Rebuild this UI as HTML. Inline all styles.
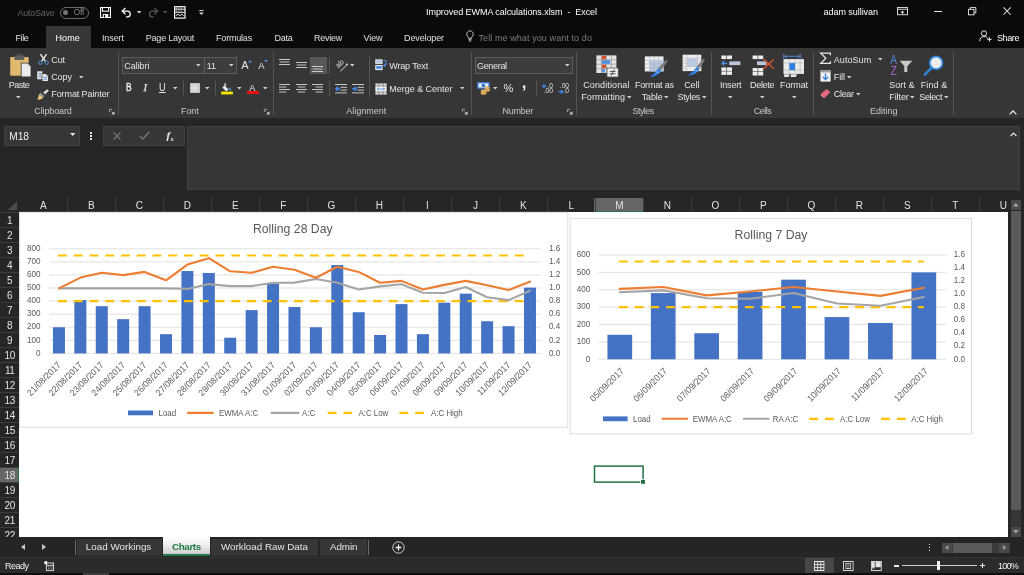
<!DOCTYPE html><html><head><meta charset="utf-8"><title>Improved EWMA calculations.xlsm - Excel</title><style>
*{box-sizing:border-box;margin:0;padding:0}
html,body{width:1024px;height:575px;overflow:hidden;background:#262626}
body{font-family:"Liberation Sans",sans-serif;font-size:9px;color:#e6e6e6;position:relative}
.a{position:absolute}
.t{position:absolute;white-space:nowrap;line-height:12px;height:12px}
.c{text-align:center}
svg{position:absolute;overflow:visible}
</style></head><body><div id="w" style="position:absolute;left:0;top:0;width:1024px;height:575px;will-change:transform">
<div class="a" style="left:0px;top:0px;width:1024px;height:48px;background:#0a0a0a;"></div>
<div class="a" style="left:46px;top:26px;width:45px;height:22px;background:#363636;"></div>
<div class="t" style="left:17.5px;top:7.00px;font-size:9px;color:#626262;letter-spacing:-0.254px;">AutoSave</div>
<div class="a" style="left:60px;top:7px;width:29px;height:12px;border:1px solid #6a6a6a;border-radius:6px"></div>
<div class="a" style="left:63px;top:10px;width:5.2px;height:5.2px;border-radius:50%;background:#767676"></div>
<div class="t" style="left:73.8px;top:7.2px;color:#8a8a8a;font-size:8.2px;letter-spacing:-0.2px">Off</div>
<svg style="left:100.1px;top:7px" width="11" height="11" viewBox="0 0 12 12"><path d="M0.6 0.6h10.8v10.8h-10.8z" fill="none" stroke="#fff" stroke-width="1.2"/><rect x="2.6" y="0.6" width="6.8" height="4" fill="none" stroke="#fff" stroke-width="1.1"/><rect x="3" y="7.6" width="6" height="3.8" fill="#fff"/><rect x="4.2" y="8.6" width="1.5" height="2.8" fill="#0a0a0a"/></svg>
<svg style="left:121.3px;top:6.8px" width="11.8" height="10.9" viewBox="0 0 13 12"><path d="M5 1 L1.3 4.5 L5 8" fill="none" stroke="#fff" stroke-width="1.4"/><path d="M1.5 4.5 H7.5 A3.3 3.3 0 0 1 7.5 11 H5.5" fill="none" stroke="#fff" stroke-width="1.4"/></svg>
<svg style="left:137px;top:11px" width="4.4" height="2.6"><path d="M0 0h4.4l-2.2 2.6z" fill="#ddd"/></svg>
<svg style="left:147.2px;top:6.8px" width="11.8" height="10.9" viewBox="0 0 13 12"><g transform="translate(13,0) scale(-1,1)"><path d="M5 1 L1.3 4.5 L5 8" fill="none" stroke="#555" stroke-width="1.4"/><path d="M1.5 4.5 H7.5 A3.3 3.3 0 0 1 7.5 11 H5.5" fill="none" stroke="#555" stroke-width="1.4"/></g></svg>
<svg style="left:163.2px;top:11px" width="4.4" height="2.6"><path d="M0 0h4.4l-2.2 2.6z" fill="#555"/></svg>
<svg style="left:173.8px;top:6.2px" width="11.6" height="12.8" viewBox="0 0 12 13"><rect x="0.6" y="0.6" width="10.8" height="11.8" fill="none" stroke="#fff" stroke-width="1.2"/><path d="M0.6 3.2H11.4M0.6 6.4H11.4" stroke="#fff" stroke-width="1"/><path d="M2 2h1.2M4.4 2h1.2M6.8 2h1.2M2 5h1.2M4.4 5h1.2M6.8 5h1.2" stroke="#fff" stroke-width="0.9"/><path d="M2 9.8l2-1.4 2 1.4 2-1.4 2 1.4" fill="none" stroke="#fff" stroke-width="1"/></svg>
<svg style="left:199px;top:10px" width="5" height="6"><path d="M0.3 0.6h4.2" stroke="#ddd" stroke-width="1"/><path d="M0.1 2.4h4.6l-2.3 2.7z" fill="#ddd"/></svg>
<div class="t" style="left:426px;top:6.00px;font-size:9px;color:#fff;letter-spacing:-0.050px;">Improved EWMA calculations.xlsm &nbsp;-&nbsp; Excel</div>
<div class="t" style="left:823.5px;top:6.00px;font-size:9px;color:#fff;letter-spacing:-0.041px;">adam sullivan</div>
<svg style="left:897.3px;top:7px" width="11" height="8.2" viewBox="0 0 12 9"><rect x="0.5" y="0.5" width="11" height="8" fill="none" stroke="#e6e6e6" stroke-width="1"/><path d="M0.5 2.5H11.5" stroke="#e6e6e6" stroke-width="1"/><path d="M6 3.8l2.2 2.4H3.8z" fill="#e6e6e6"/><path d="M6 6v1.6" stroke="#e6e6e6" stroke-width="1"/></svg>
<div class="a" style="left:933.7px;top:10.6px;width:8px;height:1px;background:#e6e6e6;"></div>
<svg style="left:967.8px;top:7px" width="8.3" height="8.3" viewBox="0 0 9 9"><rect x="0.5" y="2.5" width="6" height="6" fill="none" stroke="#e6e6e6" stroke-width="1"/><path d="M2.5 2.5V0.5H8.5V6.5H6.5" fill="none" stroke="#e6e6e6" stroke-width="1"/></svg>
<svg style="left:1002.6px;top:7.3px" width="8.2" height="8.2" viewBox="0 0 9 9"><path d="M0.5 0.5L8.5 8.5M8.5 0.5L0.5 8.5" stroke="#e6e6e6" stroke-width="1.1"/></svg>
<div class="t" style="left:15.5px;top:31.50px;font-size:9px;color:#e0e0e0;letter-spacing:-0.376px;">File</div>
<div class="t" style="left:55.5px;top:31.50px;font-size:9px;color:#fff;letter-spacing:0.123px;">Home</div>
<div class="t" style="left:102px;top:31.50px;font-size:9px;color:#e0e0e0;letter-spacing:-0.126px;">Insert</div>
<div class="t" style="left:145.75px;top:31.50px;font-size:9px;color:#e0e0e0;letter-spacing:-0.208px;">Page Layout</div>
<div class="t" style="left:216px;top:31.50px;font-size:9px;color:#e0e0e0;letter-spacing:-0.188px;">Formulas</div>
<div class="t" style="left:274.5px;top:31.50px;font-size:9px;color:#e0e0e0;letter-spacing:-0.253px;">Data</div>
<div class="t" style="left:314px;top:31.50px;font-size:9px;color:#e0e0e0;letter-spacing:-0.252px;">Review</div>
<div class="t" style="left:363.5px;top:31.50px;font-size:9px;color:#e0e0e0;letter-spacing:-0.086px;">View</div>
<div class="t" style="left:404px;top:31.50px;font-size:9px;color:#e0e0e0;letter-spacing:-0.114px;">Developer</div>
<svg style="left:466.2px;top:31.4px" width="8" height="11" viewBox="0 0 8 11"><path d="M2.6 7.4V6.2A3.3 3.3 0 1 1 5.4 6.2V7.4z" fill="none" stroke="#d4d4d4" stroke-width="0.9"/><path d="M2.5 8.7H5.5M2.8 10H5.2" stroke="#d4d4d4" stroke-width="0.9"/></svg>
<div class="t" style="left:478.5px;top:31.50px;font-size:9px;color:#7c7c7c;letter-spacing:0.090px;">Tell me what you want to do</div>
<svg style="left:979.4px;top:30.4px" width="13" height="12" viewBox="0 0 13 12"><circle cx="5" cy="3.4" r="2.6" fill="none" stroke="#e6e6e6" stroke-width="1"/><path d="M0.6 11.2C0.8 8 2.6 6.6 5 6.6S8.4 7.4 8.8 8.6" fill="none" stroke="#e6e6e6" stroke-width="1"/><path d="M10.4 7.2v4.4M8.2 9.4h4.4" stroke="#e6e6e6" stroke-width="1"/></svg>
<div class="t" style="left:997px;top:31.50px;font-size:9px;color:#fff;letter-spacing:-0.403px;">Share</div>
<div class="a" style="left:0px;top:48px;width:1024px;height:70px;background:#363636;"></div>
<svg style="left:9.5px;top:54px" width="22" height="23" viewBox="0 0 22 23">
<rect x="0.2" y="3" width="18.5" height="18.8" rx="0.8" fill="#e0b96f"/>
<rect x="4.4" y="1.4" width="9.8" height="4.6" rx="0.8" fill="#5e5e5e"/><rect x="7.4" y="0.2" width="3.8" height="2.4" rx="1" fill="none" stroke="#5e5e5e" stroke-width="1"/>
<path d="M10.8 8.7h7.4l3.2 3.2v11H10.8z" fill="#363636"/>
<path d="M11.6 9.5h6.2l2.8 2.8v10.1H11.6z" fill="#ececec"/><path d="M17.8 9.5v2.8h2.8z" fill="#b8b8b8"/></svg>
<div class="t" style="left:8.75px;top:79.05px;font-size:9px;color:#e6e6e6;letter-spacing:-0.503px;">Paste</div>
<svg style="left:16.05px;top:95.7px" width="4.5" height="2.6"><path d="M0 0h4.5l-2.25 2.6z" fill="#d0d0d0"/></svg>
<svg style="left:37.5px;top:53.5px" width="11" height="11" viewBox="0 0 11 11"><path d="M2.4 0.2L7.4 7.4M8.6 0.2L3.6 7.4" stroke="#e8e8e8" stroke-width="1.4" fill="none"/><circle cx="2.3" cy="8.7" r="1.7" fill="none" stroke="#4f8fe0" stroke-width="1"/><circle cx="8.7" cy="8.7" r="1.7" fill="none" stroke="#4f8fe0" stroke-width="1"/></svg>
<div class="t" style="left:51.25px;top:53.55px;font-size:9px;color:#e6e6e6;letter-spacing:-0.085px;">Cut</div>
<svg style="left:36.5px;top:71px" width="12" height="11" viewBox="0 0 12 11"><rect x="0.2" y="0.3" width="5.2" height="8" fill="#e8e8e8"/><path d="M1.6 2.4h2.4M1.6 4.2h2.4M1.6 6h2.4" stroke="#4f7fd0" stroke-width="0.8"/><path d="M4.6 2.2h4.6l2.6 2.6v5.9H4.6z" fill="#363636"/><path d="M5.4 3h3.4l2.2 2.2v4.7H5.4z" fill="#e8e8e8"/><path d="M8.8 3v2.2h2.2z" fill="#a8b8d8"/><path d="M6.4 6.4h3.6M6.4 8.2h3.6" stroke="#4f7fd0" stroke-width="0.8"/></svg>
<div class="t" style="left:51.25px;top:71.05px;font-size:9px;color:#e6e6e6;letter-spacing:-0.128px;">Copy</div>
<svg style="left:79.05px;top:75.7px" width="4.5" height="2.6"><path d="M0 0h4.5l-2.25 2.6z" fill="#d0d0d0"/></svg>
<svg style="left:37px;top:88.5px" width="12" height="11" viewBox="0 0 12 11"><path d="M6.2 3.2L10.2 0.2L11.8 1.8L8.2 5.4z" fill="#d8d8d8"/><path d="M3.8 3.4L7.6 7.2L6.4 8.4L2.6 4.6z" fill="#8a8a8a"/><path d="M2.6 4.8L6.2 8.4C5 10.2 3 10.8 0.2 10.6C1.4 9 1.2 6.6 2.6 4.8z" fill="#e8c07a"/></svg>
<div class="t" style="left:51.25px;top:88.30px;font-size:9px;color:#e6e6e6;letter-spacing:-0.091px;">Format Painter</div>
<div class="t" style="left:34.25px;top:105.30px;font-size:9px;color:#c8c8c8;letter-spacing:-0.114px;">Clipboard</div>
<svg style="left:109.3px;top:109.3px" width="6" height="6" viewBox="0 0 6 6"><path d="M0.4 3V0.4H3" fill="none" stroke="#bbb" stroke-width="0.8"/><path d="M5.6 2.2V5.6H2.2z" fill="#ccc"/><path d="M2.6 2.6L4.6 4.6" stroke="#ccc" stroke-width="0.8"/></svg>
<div class="a" style="left:117.5px;top:52px;width:1px;height:63px;background:#555;"></div>
<div class="a" style="left:121.5px;top:57px;width:83.5px;height:16.5px;background:#3d3d3d;border:1px solid #5c5c5c"></div>
<div class="a" style="left:204px;top:57px;width:32.5px;height:16.5px;background:#3d3d3d;border:1px solid #5c5c5c"></div>
<div class="t" style="left:124.25px;top:59.55px;font-size:9px;color:#e6e6e6;letter-spacing:-0.037px;">Calibri</div>
<svg style="left:196.45px;top:64.2px" width="4.5" height="2.6"><path d="M0 0h4.5l-2.25 2.6z" fill="#d0d0d0"/></svg>
<div class="t" style="left:206.7px;top:59.55px;color:#e6e6e6;font-size:9px;">11</div>
<svg style="left:228.95px;top:64.2px" width="4.5" height="2.6"><path d="M0 0h4.5l-2.25 2.6z" fill="#d0d0d0"/></svg>
<div class="t" style="left:241.2px;top:59px;color:#e6e6e6;font-size:11px">A</div>
<svg style="left:247.5px;top:59.5px" width="4" height="2.5"><path d="M0 2.5h4l-2-2.5z" fill="#4f8fe0"/></svg>
<div class="t" style="left:258.2px;top:60.2px;color:#e6e6e6;font-size:9.5px">A</div>
<svg style="left:264px;top:60px" width="4" height="2.5"><path d="M0 0h4l-2 2.5z" fill="#4f8fe0"/></svg>
<div class="t" style="left:126.2px;top:81.5px;color:#e6e6e6;font-size:10.3px;-webkit-text-stroke:0.45px #e6e6e6;transform:scaleX(0.82);transform-origin:0 0">B</div>
<div class="t" style="left:143.6px;top:81.5px;color:#e6e6e6;font-size:10.6px;font-style:italic;font-family:'Liberation Serif',serif;-webkit-text-stroke:0.25px #e6e6e6">I</div>
<div class="t" style="left:159.1px;top:81.7px;color:#e6e6e6;font-size:10px;text-decoration:underline;text-underline-offset:1.2px;transform:scaleX(0.92);transform-origin:0 0">U</div>
<svg style="left:172.75px;top:87.4px" width="4.5" height="2.6"><path d="M0 0h4.5l-2.25 2.6z" fill="#d0d0d0"/></svg>
<div class="a" style="left:183.3px;top:80px;width:1px;height:15.5px;background:#555;"></div>
<svg style="left:190px;top:83.2px" width="10" height="10" viewBox="0 0 10 10"><rect x="0" y="0" width="10" height="10" fill="#d0d0d0"/><path d="M0.5 5H9.5M5 0.5V9.5" stroke="#f6f6f6" stroke-width="1" stroke-dasharray="1 0.6"/><rect x="0.4" y="0.4" width="9.2" height="9.2" fill="none" stroke="#bdbdbd" stroke-width="0.8"/></svg>
<svg style="left:205.05px;top:87.4px" width="4.5" height="2.6"><path d="M0 0h4.5l-2.25 2.6z" fill="#d0d0d0"/></svg>
<div class="a" style="left:214.5px;top:80px;width:1px;height:15.5px;background:#555;"></div>
<svg style="left:221px;top:81.5px" width="13" height="13" viewBox="0 0 13 13"><path d="M3.4 3.2L7.6 7.4L5.2 9.4L1.4 5.4z" fill="#e8e8e8"/><path d="M4.2 0.8V4" stroke="#ddd" stroke-width="0.9"/><path d="M3.2 2.8h2.2" stroke="#ddd" stroke-width="0.8"/><path d="M8 5.4C10 6 10.6 7.6 10 9.2C9.4 8 8.8 7.4 7.6 7.4z" fill="#4f8fe0"/><rect x="0.1" y="9.6" width="11.8" height="2.8" fill="#f5e800"/></svg>
<svg style="left:237.25px;top:87.4px" width="4.5" height="2.6"><path d="M0 0h4.5l-2.25 2.6z" fill="#d0d0d0"/></svg>
<div class="t" style="left:249.3px;top:82.3px;color:#e6e6e6;font-size:9.2px">A</div>
<div class="a" style="left:246.7px;top:91.1px;width:12px;height:2.6px;background:#e81010;"></div>
<svg style="left:262.75px;top:87.4px" width="4.5" height="2.6"><path d="M0 0h4.5l-2.25 2.6z" fill="#d0d0d0"/></svg>
<div class="t" style="left:181px;top:105.30px;font-size:9px;color:#c8c8c8;letter-spacing:-0.065px;">Font</div>
<svg style="left:264.3px;top:109.3px" width="6" height="6" viewBox="0 0 6 6"><path d="M0.4 3V0.4H3" fill="none" stroke="#bbb" stroke-width="0.8"/><path d="M5.6 2.2V5.6H2.2z" fill="#ccc"/><path d="M2.6 2.6L4.6 4.6" stroke="#ccc" stroke-width="0.8"/></svg>
<div class="a" style="left:273.3px;top:52px;width:1px;height:63px;background:#555;"></div>
<svg style="left:279.3px;top:59px" width="11" height="12"><path d="M0 0.5H11" stroke="#d8d8d8" stroke-width="0.9"/><path d="M0.8 3H10.2" stroke="#d8d8d8" stroke-width="0.9"/><path d="M0 5.5H11" stroke="#d8d8d8" stroke-width="0.9"/></svg>
<svg style="left:295.8px;top:61.5px" width="11" height="12"><path d="M0 0.5H11" stroke="#d8d8d8" stroke-width="0.9"/><path d="M0.8 3H10.2" stroke="#d8d8d8" stroke-width="0.9"/><path d="M0 5.5H11" stroke="#d8d8d8" stroke-width="0.9"/></svg>
<div class="a" style="left:309.5px;top:57px;width:17px;height:17px;background:#575757;"></div>
<svg style="left:312.4px;top:66px" width="11" height="12"><path d="M0 0.5H11" stroke="#d8d8d8" stroke-width="0.9"/><path d="M0.8 3H10.2" stroke="#d8d8d8" stroke-width="0.9"/><path d="M0 5.5H11" stroke="#d8d8d8" stroke-width="0.9"/></svg>
<div class="a" style="left:329.0px;top:57px;width:1px;height:17px;background:#555;"></div>
<svg style="left:334.5px;top:58.5px" width="14" height="13" viewBox="0 0 14 13"><text transform="translate(3.4 9.6) rotate(-45)" font-size="7.6" fill="#e0e0e0" font-family="Liberation Sans">ab</text><path d="M5.4 12.2L11.8 5.8" stroke="#e0e0e0" stroke-width="1"/><circle cx="12" cy="5.5" r="1" fill="#e0e0e0"/></svg>
<svg style="left:349.55px;top:64.2px" width="4.5" height="2.6"><path d="M0 0h4.5l-2.25 2.6z" fill="#d0d0d0"/></svg>
<div class="a" style="left:368.8px;top:56px;width:1px;height:40.5px;background:#555;"></div>
<svg style="left:374.8px;top:59px" width="13" height="12" viewBox="0 0 13 12"><rect x="0.2" y="0.3" width="7.4" height="4.6" fill="#e4e4e4"/><rect x="1.2" y="1.3" width="5.4" height="2.4" fill="#a9c4ec"/><rect x="0.2" y="5.9" width="7.4" height="5.2" fill="#e4e4e4"/><rect x="1.2" y="7.1" width="5.4" height="2.6" fill="#3f82e0"/><path d="M8.6 1.6H11V6.4H8.8" fill="none" stroke="#4f8fe0" stroke-width="1"/><path d="M10 4.8L8.4 6.4L10 8" fill="none" stroke="#4f8fe0" stroke-width="1"/></svg>
<div class="t" style="left:389.25px;top:59.55px;font-size:9px;color:#e6e6e6;letter-spacing:-0.159px;">Wrap Text</div>
<svg style="left:279.3px;top:84px" width="11" height="12"><path d="M0 0.5H11" stroke="#d8d8d8" stroke-width="0.9"/><path d="M0 3H7.5" stroke="#d8d8d8" stroke-width="0.9"/><path d="M0 5.5H11" stroke="#d8d8d8" stroke-width="0.9"/><path d="M0 8H7.5" stroke="#d8d8d8" stroke-width="0.9"/></svg>
<svg style="left:295.8px;top:84px" width="11" height="12"><path d="M0 0.5H11" stroke="#d8d8d8" stroke-width="0.9"/><path d="M1.8 3H9.2" stroke="#d8d8d8" stroke-width="0.9"/><path d="M0 5.5H11" stroke="#d8d8d8" stroke-width="0.9"/><path d="M1.8 8H9.2" stroke="#d8d8d8" stroke-width="0.9"/></svg>
<svg style="left:312.4px;top:84px" width="11" height="12"><path d="M0 0.5H11" stroke="#d8d8d8" stroke-width="0.9"/><path d="M3.5 3H11" stroke="#d8d8d8" stroke-width="0.9"/><path d="M0 5.5H11" stroke="#d8d8d8" stroke-width="0.9"/><path d="M3.5 8H11" stroke="#d8d8d8" stroke-width="0.9"/></svg>
<div class="a" style="left:329.0px;top:80px;width:1px;height:15.5px;background:#555;"></div>
<svg style="left:335px;top:83.5px" width="12" height="10" viewBox="0 0 12 10"><path d="M0 0.5H12M5.5 3.3H12M5.5 6.1H12M0 8.9H12" stroke="#d8d8d8" stroke-width="0.9"/><path d="M5 4.7H1M3 2.5L0.8 4.7L3 6.9" stroke="#3f86e6" stroke-width="1.4" fill="none"/></svg>
<svg style="left:351.8px;top:83.5px" width="12" height="10" viewBox="0 0 12 10"><path d="M0 0.5H12M5.5 3.3H12M5.5 6.1H12M0 8.9H12" stroke="#d8d8d8" stroke-width="0.9"/><path d="M0.2 4.7H4.2M2.2 2.5L4.4 4.7L2.2 6.9" stroke="#3f86e6" stroke-width="1.4" fill="none"/></svg>
<svg style="left:375px;top:82.7px" width="12" height="12" viewBox="0 0 12 12"><rect x="0.4" y="0.4" width="11.2" height="11.2" fill="#dcdcdc"/><path d="M0.4 3.2H11.6M0.4 8.8H11.6M4 0.4V3.2M8 0.4V3.2M4 8.8V11.6M8 8.8V11.6" stroke="#555" stroke-width="0.7"/><rect x="0.8" y="3.6" width="10.4" height="4.8" fill="#f4f4f4"/><path d="M2.4 6H9.6M3.8 4.8L2.4 6L3.8 7.2M8.2 4.8L9.6 6L8.2 7.2" stroke="#4f8fe0" stroke-width="0.9" fill="none"/></svg>
<div class="t" style="left:389.25px;top:82.80px;font-size:9px;color:#e6e6e6;letter-spacing:-0.020px;">Merge &amp; Center</div>
<svg style="left:460.25px;top:87.4px" width="4.5" height="2.6"><path d="M0 0h4.5l-2.25 2.6z" fill="#d0d0d0"/></svg>
<div class="t" style="left:346.25px;top:105.30px;font-size:9px;color:#c8c8c8;letter-spacing:-0.002px;">Alignment</div>
<svg style="left:462px;top:109.3px" width="6" height="6" viewBox="0 0 6 6"><path d="M0.4 3V0.4H3" fill="none" stroke="#bbb" stroke-width="0.8"/><path d="M5.6 2.2V5.6H2.2z" fill="#ccc"/><path d="M2.6 2.6L4.6 4.6" stroke="#ccc" stroke-width="0.8"/></svg>
<div class="a" style="left:470.8px;top:52px;width:1px;height:63px;background:#555;"></div>
<div class="a" style="left:474.5px;top:57px;width:98px;height:16.5px;background:#3d3d3d;border:1px solid #5c5c5c"></div>
<div class="t" style="left:477px;top:59.55px;font-size:9px;color:#e6e6e6;letter-spacing:-0.324px;">General</div>
<svg style="left:564.75px;top:64.2px" width="4.5" height="2.6"><path d="M0 0h4.5l-2.25 2.6z" fill="#d0d0d0"/></svg>
<svg style="left:476.5px;top:82.2px" width="14" height="13" viewBox="0 0 14 13"><rect x="0.2" y="0.2" width="12.4" height="6.5" fill="#3f86e6"/><rect x="1.5" y="1.4" width="9.8" height="4.1" fill="#e6edf8"/><circle cx="6.4" cy="3.4" r="1.7" fill="#2f66c0"/><g stroke="#b98a3e" stroke-width="0.5"><ellipse cx="10.2" cy="8.6" rx="2.6" ry="1.1" fill="#e6bd74"/><ellipse cx="10.2" cy="7.2" rx="2.6" ry="1.1" fill="#e6bd74"/><ellipse cx="10.2" cy="5.8" rx="2.6" ry="1.1" fill="#e6bd74"/><ellipse cx="6.6" cy="11.6" rx="2.9" ry="1.1" fill="#e6bd74"/><ellipse cx="6.6" cy="10.2" rx="2.9" ry="1.1" fill="#e6bd74"/><ellipse cx="6.6" cy="8.8" rx="2.9" ry="1.1" fill="#e6bd74"/></g></svg>
<svg style="left:492.75px;top:87.4px" width="4.5" height="2.6"><path d="M0 0h4.5l-2.25 2.6z" fill="#d0d0d0"/></svg>
<div class="t" style="left:503.6px;top:82.2px;color:#e6e6e6;font-size:11px">%</div>
<div class="t" style="left:521.8px;top:77px;color:#e6e6e6;font-size:17px;font-weight:bold">,</div>
<div class="a" style="left:535.8px;top:80px;width:1px;height:15.5px;background:#555;"></div>
<svg style="left:542px;top:82.5px" width="12" height="11" viewBox="0 0 12 11" font-family="Liberation Sans"><path d="M4.8 3.3H0.8M2.6 1.5L0.6 3.3L2.6 5.1" stroke="#3f86e6" stroke-width="1.2" fill="none"/><text x="5.4" y="5.3" font-size="6.6" fill="#e0e0e0">.0</text><text x="1.6" y="10.3" font-size="6.6" fill="#e0e0e0" textLength="9.4" lengthAdjust="spacingAndGlyphs">.00</text></svg>
<svg style="left:558px;top:82.5px" width="12" height="11" viewBox="0 0 12 11" font-family="Liberation Sans"><text x="1.8" y="5.3" font-size="6.6" fill="#e0e0e0" textLength="9.2" lengthAdjust="spacingAndGlyphs">.00</text><path d="M0.3 8.7H4.6M2.8 6.9L4.8 8.7L2.8 10.5" stroke="#3f86e6" stroke-width="1.2" fill="none"/><text x="5.4" y="10.3" font-size="6.6" fill="#e0e0e0">.0</text></svg>
<div class="t" style="left:502.5px;top:105.30px;font-size:9px;color:#c8c8c8;letter-spacing:-0.252px;">Number</div>
<svg style="left:567px;top:109.3px" width="6" height="6" viewBox="0 0 6 6"><path d="M0.4 3V0.4H3" fill="none" stroke="#bbb" stroke-width="0.8"/><path d="M5.6 2.2V5.6H2.2z" fill="#ccc"/><path d="M2.6 2.6L4.6 4.6" stroke="#ccc" stroke-width="0.8"/></svg>
<div class="a" style="left:575.8px;top:52px;width:1px;height:63px;background:#555;"></div>
<svg style="left:596px;top:54.5px" width="23" height="23" viewBox="0 0 23 23"><rect x="0.4" y="0.4" width="20" height="17.6" fill="#e4e4e4"/><path d="M0.4 4.8H20.4M0.4 9.2H20.4M0.4 13.6H20.4M5.4 0.4V18M10.4 0.4V18M15.4 0.4V18" stroke="#8a8a8a" stroke-width="0.6"/><rect x="5.8" y="0.8" width="4.2" height="3.6" fill="#d8502f"/><rect x="5.8" y="5.2" width="8.4" height="3.6" fill="#4f8fe0"/><rect x="5.8" y="9.6" width="4.2" height="3.6" fill="#d8502f"/><rect x="5.8" y="14" width="3" height="3.6" fill="#4f8fe0"/><rect x="11" y="13" width="11.2" height="9" fill="#f0f0f0" stroke="#555" stroke-width="0.8"/><path d="M13.6 16.4h6M13.6 18.8h6M18.2 14.6l-3 6" stroke="#444" stroke-width="0.9"/></svg>
<div class="t" style="left:583.25px;top:79.05px;font-size:9px;color:#e6e6e6;letter-spacing:0.111px;">Conditional</div>
<div class="t" style="left:581.25px;top:91.05px;font-size:9px;color:#e6e6e6;letter-spacing:0.074px;">Formatting</div>
<svg style="left:627.25px;top:95.9px" width="4.5" height="2.6"><path d="M0 0h4.5l-2.25 2.6z" fill="#d0d0d0"/></svg>
<svg style="left:644px;top:55px" width="24" height="23" viewBox="0 0 24 23"><rect x="0.8" y="1.4" width="18.7" height="15" fill="#eef0f3"/><rect x="5.8" y="5.5" width="13.7" height="10.9" fill="#b9c9e2"/><path d="M0.8 5.3H19.5M0.8 9H19.5M0.8 12.7H19.5M5.6 1.4V16.4M10.2 1.4V16.4M14.8 1.4V16.4" stroke="#a9b0bc" stroke-width="0.6"/><path d="M22.4 4.6L23.6 6.2L17 15.2L14.4 13z" fill="#7d7d7d"/><path d="M14.2 13.2L17 15.4C15.4 19.6 11 21.8 5.6 21.8C9.6 19.8 11.6 17 14.2 13.2z" fill="#2f7fe0"/><path d="M12.6 17.2C13.6 16.6 14.6 17 15 17.8" stroke="#dfeaf8" stroke-width="0.9" fill="none"/></svg>
<div class="t" style="left:635px;top:79.05px;font-size:9px;color:#e6e6e6;letter-spacing:-0.195px;">Format as</div>
<div class="t" style="left:641.75px;top:91.05px;font-size:9px;color:#e6e6e6;letter-spacing:-0.153px;">Table</div>
<svg style="left:664.05px;top:95.9px" width="4.5" height="2.6"><path d="M0 0h4.5l-2.25 2.6z" fill="#d0d0d0"/></svg>
<svg style="left:682px;top:54px" width="24" height="23" viewBox="0 0 24 23"><rect x="0.6" y="0.7" width="18.7" height="16.4" fill="#eeeeee"/><path d="M4.8 0.7V17.1M15.4 0.7V17.1M0.6 4.2H19.3M0.6 12.6H19.3M0.6 14.9H4.8M15.4 14.9H19.3M0.6 6.8H4.8M0.6 9.6H4.8M15.4 6.8H19.3M15.4 9.6H19.3" stroke="#b4b4b4" stroke-width="0.6"/><rect x="5" y="4.4" width="10.2" height="8" fill="#b9c9e2"/><path d="M21.6 4.6L22.8 6.2L17.4 14.6L14.8 12.6z" fill="#7d7d7d"/><path d="M14.6 12.8L17.4 15C15.8 19.2 11.4 21.4 5.6 21.4C9.6 19.4 12 16.6 14.6 12.8z" fill="#2f7fe0"/><path d="M13 16.8C14 16.2 15 16.6 15.4 17.4" stroke="#dfeaf8" stroke-width="0.9" fill="none"/></svg>
<div class="t" style="left:684.25px;top:79.05px;font-size:9px;color:#e6e6e6;letter-spacing:-0.126px;">Cell</div>
<div class="t" style="left:677.5px;top:91.05px;font-size:9px;color:#e6e6e6;letter-spacing:-0.335px;">Styles</div>
<svg style="left:702.05px;top:95.9px" width="4.5" height="2.6"><path d="M0 0h4.5l-2.25 2.6z" fill="#d0d0d0"/></svg>
<div class="t" style="left:632.5px;top:105.30px;font-size:9px;color:#c8c8c8;letter-spacing:-0.543px;">Styles</div>
<div class="a" style="left:710.8px;top:52px;width:1px;height:63px;background:#555;"></div>
<svg style="left:721px;top:54.5px" width="21" height="21" viewBox="0 0 21 21"><g fill="#ececec"><rect x="0.4" y="0.5" width="5" height="3.6"/><rect x="6" y="0.5" width="5" height="3.6"/><rect x="0.4" y="12.4" width="5" height="3.5"/><rect x="6" y="12.4" width="5" height="3.5"/><rect x="0.4" y="16.4" width="5" height="3.5"/><rect x="6" y="16.4" width="5" height="3.5"/></g><rect x="8.2" y="6.4" width="11.2" height="3.7" fill="#b9c6dc"/><path d="M6.4 8.3H1M3.4 6.1L1 8.3L3.4 10.5" stroke="#4f8fe0" stroke-width="1.3" fill="none"/></svg>
<div class="t" style="left:720px;top:79.05px;font-size:9px;color:#e6e6e6;letter-spacing:-0.210px;">Insert</div>
<svg style="left:728.25px;top:95.7px" width="4.5" height="2.6"><path d="M0 0h4.5l-2.25 2.6z" fill="#d0d0d0"/></svg>
<svg style="left:751.5px;top:54.5px" width="23" height="21" viewBox="0 0 23 21"><g fill="#ececec"><rect x="0.6" y="0.5" width="5" height="3.6"/><rect x="6.2" y="0.5" width="5" height="3.6"/><rect x="0.6" y="13" width="5" height="3.5"/><rect x="6.2" y="13" width="5" height="3.5"/><rect x="0.6" y="17" width="5" height="3.5"/><rect x="6.2" y="17" width="5" height="3.5"/></g><rect x="5" y="6.4" width="9.6" height="3.7" fill="#b9c6dc"/><path d="M11.6 4.2L22 13.8M21.6 4.6L11.6 13.8" stroke="#e0562a" stroke-width="1.3"/></svg>
<div class="t" style="left:750px;top:79.05px;font-size:9px;color:#e6e6e6;letter-spacing:-0.294px;">Delete</div>
<svg style="left:759.75px;top:95.7px" width="4.5" height="2.6"><path d="M0 0h4.5l-2.25 2.6z" fill="#d0d0d0"/></svg>
<svg style="left:783px;top:52.5px" width="22" height="25" viewBox="0 0 22 25"><path d="M1.4 3.3H16.8" stroke="#4f8fe0" stroke-width="0.9"/><path d="M0.4 1.2V5.4M17.8 1.2V5.4" stroke="#4f8fe0" stroke-width="0.8"/><path d="M3.4 1.5L1.3 3.3L3.4 5.1M14.8 1.5L16.9 3.3L14.8 5.1" stroke="#4f8fe0" stroke-width="0.9" fill="none"/><rect x="0.5" y="6.1" width="20.5" height="14.8" fill="#ececec"/><path d="M0.5 9.9H21M0.5 17.2H21M6.2 6.1V20.9M12.1 6.1V20.9M17.2 6.1V20.9" stroke="#b0b0b0" stroke-width="0.6"/><rect x="6.4" y="10.1" width="5.6" height="7" fill="#2f7fe0"/><path d="M1.1 21.2H6.9L5.5 24H1.1zM8 21.2H14.2L12.8 24H7.4z" fill="#e4e4e4"/></svg>
<div class="t" style="left:780px;top:79.05px;font-size:9px;color:#e6e6e6;letter-spacing:-0.084px;">Format</div>
<svg style="left:792.05px;top:95.7px" width="4.5" height="2.6"><path d="M0 0h4.5l-2.25 2.6z" fill="#d0d0d0"/></svg>
<div class="t" style="left:753.75px;top:105.30px;font-size:9px;color:#c8c8c8;letter-spacing:-0.501px;">Cells</div>
<div class="a" style="left:813.3px;top:52px;width:1px;height:63px;background:#555;"></div>
<svg style="left:819.5px;top:53.4px" width="11" height="11" viewBox="0 0 11 11"><path d="M10.4 2.2V0.2H0.8L5.8 5.2L0.8 10.3H10.4V8.3" fill="none" stroke="#e6e6e6" stroke-width="1.3"/></svg>
<div class="t" style="left:833.75px;top:53.55px;font-size:9px;color:#e6e6e6;letter-spacing:0.069px;">AutoSum</div>
<svg style="left:878.25px;top:58.2px" width="4.5" height="2.6"><path d="M0 0h4.5l-2.25 2.6z" fill="#d0d0d0"/></svg>
<svg style="left:820px;top:70.2px" width="11" height="12" viewBox="0 0 11 12"><rect x="0.4" y="0.4" width="10.2" height="11.2" fill="#f0f0f0"/><rect x="0.4" y="0.4" width="10.2" height="2" fill="#9a9a9a"/><path d="M5.5 3.6V9.4M3 7L5.5 9.6L8 7" stroke="#2f7fe0" stroke-width="1.3" fill="none"/></svg>
<div class="t" style="left:833.75px;top:70.80px;font-size:9px;color:#e6e6e6;letter-spacing:-0.062px;">Fill</div>
<svg style="left:847.05px;top:75.7px" width="4.5" height="2.6"><path d="M0 0h4.5l-2.25 2.6z" fill="#d0d0d0"/></svg>
<svg style="left:820px;top:89px" width="11" height="9" viewBox="0 0 11 9"><path d="M6.6 0.3L10 3.2L4.4 8.7L0.6 5.6z" fill="#e0697d" stroke="#e0697d" stroke-width="0.8" stroke-linejoin="round"/><path d="M1 6.2L4 8.6" stroke="#f0a8b4" stroke-width="0.8"/></svg>
<div class="t" style="left:833.75px;top:88.30px;font-size:9px;color:#e6e6e6;letter-spacing:-0.301px;">Clear</div>
<svg style="left:855.75px;top:93.2px" width="4.5" height="2.6"><path d="M0 0h4.5l-2.25 2.6z" fill="#d0d0d0"/></svg>
<svg style="left:890px;top:55px" width="23" height="21" viewBox="0 0 23 21"><text transform="translate(0.3 9.2) scale(0.84 1)" font-size="12" fill="#4f8fe0" font-family="Liberation Sans">A</text><text transform="translate(0.5 19.7) scale(0.88 1)" font-size="12" fill="#a660c8" font-family="Liberation Sans">Z</text><path d="M9.8 5.7H22.4L17.3 11.2V16.9L14.3 16.9V11.2z" fill="#c8c8c8"/></svg>
<div class="t" style="left:889.25px;top:79.05px;font-size:9px;color:#e6e6e6;letter-spacing:0.040px;">Sort &amp;</div>
<div class="t" style="left:889.25px;top:91.05px;font-size:9px;color:#e6e6e6;letter-spacing:-0.083px;">Filter</div>
<svg style="left:910.25px;top:95.9px" width="4.5" height="2.6"><path d="M0 0h4.5l-2.25 2.6z" fill="#d0d0d0"/></svg>
<svg style="left:923px;top:54.5px" width="21" height="21" viewBox="0 0 21 21"><circle cx="13.1" cy="7.8" r="6.4" fill="#ececec" stroke="#2f86e0" stroke-width="1.7"/><path d="M8.8 12.6L1.8 19.6" stroke="#2f86e0" stroke-width="2.5" stroke-linecap="round"/></svg>
<div class="t" style="left:920.75px;top:79.05px;font-size:9px;color:#e6e6e6;letter-spacing:0.123px;">Find &amp;</div>
<div class="t" style="left:919.25px;top:91.05px;font-size:9px;color:#e6e6e6;letter-spacing:-0.377px;">Select</div>
<svg style="left:944.05px;top:95.9px" width="4.5" height="2.6"><path d="M0 0h4.5l-2.25 2.6z" fill="#d0d0d0"/></svg>
<div class="t" style="left:870px;top:105.30px;font-size:9px;color:#c8c8c8;letter-spacing:-0.003px;">Editing</div>
<div class="a" style="left:953.3px;top:52px;width:1px;height:63px;background:#555;"></div>
<svg style="left:1009px;top:109.5px" width="8" height="5" viewBox="0 0 8 5"><path d="M0.6 4.4L4 1L7.4 4.4" fill="none" stroke="#e6e6e6" stroke-width="1.3"/></svg>
<div class="a" style="left:0px;top:118px;width:1024px;height:94px;background:#262626;"></div>
<div class="a" style="left:4px;top:126px;width:76px;height:19.5px;background:#363636;border:1px solid #404040"></div>
<div class="t" style="left:9.2px;top:131.00px;font-size:10.2px;color:#f0f0f0;letter-spacing:-0.047px;">M18</div>
<svg style="left:69.6px;top:133.3px" width="5.4" height="3"><path d="M0 0h5.4l-2.7 3z" fill="#e6e6e6"/></svg>
<div class="a" style="left:90.4px;top:132.0px;width:1.7px;height:1.7px;background:#e0e0e0;"></div>
<div class="a" style="left:90.4px;top:135.1px;width:1.7px;height:1.7px;background:#e0e0e0;"></div>
<div class="a" style="left:90.4px;top:138.2px;width:1.7px;height:1.7px;background:#e0e0e0;"></div>
<div class="a" style="left:103px;top:126px;width:82px;height:19.5px;background:#363636;border:1px solid #404040"></div>
<svg style="left:113.3px;top:131.5px" width="8" height="8" viewBox="0 0 8 8"><path d="M0.5 0.5L7.5 7.5M7.5 0.5L0.5 7.5" stroke="#757575" stroke-width="1.3"/></svg>
<svg style="left:138.5px;top:131px" width="11" height="9" viewBox="0 0 11 9"><path d="M0.6 5L3.8 8L10.4 0.8" fill="none" stroke="#757575" stroke-width="1.5"/></svg>
<div class="t" style="left:166.4px;top:129.2px;color:#f0f0f0;font-size:11px;font-family:'Liberation Serif',serif;font-weight:bold"><i>f</i></div>
<div class="t" style="left:170.6px;top:133px;color:#f0f0f0;font-size:6.5px;font-family:'Liberation Serif',serif;font-weight:bold;font-style:italic">x</div>
<div class="a" style="left:187px;top:126px;width:833px;height:64px;background:#363636;border:1px solid #404040"></div>
<svg style="left:1010px;top:132px" width="7" height="4.5" viewBox="0 0 7 4.5"><path d="M0.6 4L3.5 1L6.4 4" fill="none" stroke="#e6e6e6" stroke-width="1.2"/></svg>
<div class="a" style="left:19px;top:212px;width:989px;height:325px;background:#ffffff;"></div>
<div class="t c" style="left:23.4px;top:200.2px;width:40px;color:#e2e2e2;font-size:10px">A</div>
<div class="t c" style="left:71.4px;top:200.2px;width:40px;color:#e2e2e2;font-size:10px">B</div>
<div class="a" style="left:66.5px;top:198px;width:1px;height:13.5px;background:#3c3c3c;"></div>
<div class="t c" style="left:119.4px;top:200.2px;width:40px;color:#e2e2e2;font-size:10px">C</div>
<div class="a" style="left:114.5px;top:198px;width:1px;height:13.5px;background:#3c3c3c;"></div>
<div class="t c" style="left:167.4px;top:200.2px;width:40px;color:#e2e2e2;font-size:10px">D</div>
<div class="a" style="left:162.5px;top:198px;width:1px;height:13.5px;background:#3c3c3c;"></div>
<div class="t c" style="left:215.4px;top:200.2px;width:40px;color:#e2e2e2;font-size:10px">E</div>
<div class="a" style="left:210.5px;top:198px;width:1px;height:13.5px;background:#3c3c3c;"></div>
<div class="t c" style="left:263.4px;top:200.2px;width:40px;color:#e2e2e2;font-size:10px">F</div>
<div class="a" style="left:258.5px;top:198px;width:1px;height:13.5px;background:#3c3c3c;"></div>
<div class="t c" style="left:311.4px;top:200.2px;width:40px;color:#e2e2e2;font-size:10px">G</div>
<div class="a" style="left:306.5px;top:198px;width:1px;height:13.5px;background:#3c3c3c;"></div>
<div class="t c" style="left:359.4px;top:200.2px;width:40px;color:#e2e2e2;font-size:10px">H</div>
<div class="a" style="left:354.5px;top:198px;width:1px;height:13.5px;background:#3c3c3c;"></div>
<div class="t c" style="left:407.4px;top:200.2px;width:40px;color:#e2e2e2;font-size:10px">I</div>
<div class="a" style="left:402.5px;top:198px;width:1px;height:13.5px;background:#3c3c3c;"></div>
<div class="t c" style="left:455.4px;top:200.2px;width:40px;color:#e2e2e2;font-size:10px">J</div>
<div class="a" style="left:450.5px;top:198px;width:1px;height:13.5px;background:#3c3c3c;"></div>
<div class="t c" style="left:503.4px;top:200.2px;width:40px;color:#e2e2e2;font-size:10px">K</div>
<div class="a" style="left:498.5px;top:198px;width:1px;height:13.5px;background:#3c3c3c;"></div>
<div class="t c" style="left:551.4px;top:200.2px;width:40px;color:#e2e2e2;font-size:10px">L</div>
<div class="a" style="left:546.5px;top:198px;width:1px;height:13.5px;background:#3c3c3c;"></div>
<div class="a" style="left:594px;top:197.5px;width:49px;height:14.5px;background:#666666;"></div>
<div class="a" style="left:594px;top:211px;width:49px;height:1.2px;background:#1f7a45;"></div>
<div class="t c" style="left:599.4px;top:200.2px;width:40px;color:#e2e2e2;font-size:10px">M</div>
<div class="a" style="left:594.5px;top:198px;width:1px;height:13.5px;background:#3c3c3c;"></div>
<div class="t c" style="left:647.4px;top:200.2px;width:40px;color:#e2e2e2;font-size:10px">N</div>
<div class="a" style="left:642.5px;top:198px;width:1px;height:13.5px;background:#3c3c3c;"></div>
<div class="t c" style="left:695.4px;top:200.2px;width:40px;color:#e2e2e2;font-size:10px">O</div>
<div class="a" style="left:690.5px;top:198px;width:1px;height:13.5px;background:#3c3c3c;"></div>
<div class="t c" style="left:743.4px;top:200.2px;width:40px;color:#e2e2e2;font-size:10px">P</div>
<div class="a" style="left:738.5px;top:198px;width:1px;height:13.5px;background:#3c3c3c;"></div>
<div class="t c" style="left:791.4px;top:200.2px;width:40px;color:#e2e2e2;font-size:10px">Q</div>
<div class="a" style="left:786.5px;top:198px;width:1px;height:13.5px;background:#3c3c3c;"></div>
<div class="t c" style="left:839.4px;top:200.2px;width:40px;color:#e2e2e2;font-size:10px">R</div>
<div class="a" style="left:834.5px;top:198px;width:1px;height:13.5px;background:#3c3c3c;"></div>
<div class="t c" style="left:887.4px;top:200.2px;width:40px;color:#e2e2e2;font-size:10px">S</div>
<div class="a" style="left:882.5px;top:198px;width:1px;height:13.5px;background:#3c3c3c;"></div>
<div class="t c" style="left:935.4px;top:200.2px;width:40px;color:#e2e2e2;font-size:10px">T</div>
<div class="a" style="left:930.5px;top:198px;width:1px;height:13.5px;background:#3c3c3c;"></div>
<div class="t c" style="left:983.4px;top:200.2px;width:40px;color:#e2e2e2;font-size:10px">U</div>
<div class="a" style="left:978.5px;top:198px;width:1px;height:13.5px;background:#3c3c3c;"></div>
<svg style="left:7.8px;top:201px" width="9.2" height="9"><path d="M9.2 0V9H0z" fill="#4c4c4c"/></svg>
<div class="t c" style="left:0.1999999999999993px;top:215.1px;width:19px;color:#e2e2e2;font-size:10px;letter-spacing:-0.4px">1</div>
<div class="a" style="left:0px;top:211.5px;width:19px;height:1px;background:#3c3c3c;"></div>
<div class="t c" style="left:0.1999999999999993px;top:230.1px;width:19px;color:#e2e2e2;font-size:10px;letter-spacing:-0.4px">2</div>
<div class="a" style="left:0px;top:226.5px;width:19px;height:1px;background:#3c3c3c;"></div>
<div class="t c" style="left:0.1999999999999993px;top:245.1px;width:19px;color:#e2e2e2;font-size:10px;letter-spacing:-0.4px">3</div>
<div class="a" style="left:0px;top:241.5px;width:19px;height:1px;background:#3c3c3c;"></div>
<div class="t c" style="left:0.1999999999999993px;top:260.1px;width:19px;color:#e2e2e2;font-size:10px;letter-spacing:-0.4px">4</div>
<div class="a" style="left:0px;top:256.5px;width:19px;height:1px;background:#3c3c3c;"></div>
<div class="t c" style="left:0.1999999999999993px;top:275.1px;width:19px;color:#e2e2e2;font-size:10px;letter-spacing:-0.4px">5</div>
<div class="a" style="left:0px;top:271.5px;width:19px;height:1px;background:#3c3c3c;"></div>
<div class="t c" style="left:0.1999999999999993px;top:290.1px;width:19px;color:#e2e2e2;font-size:10px;letter-spacing:-0.4px">6</div>
<div class="a" style="left:0px;top:286.5px;width:19px;height:1px;background:#3c3c3c;"></div>
<div class="t c" style="left:0.1999999999999993px;top:305.1px;width:19px;color:#e2e2e2;font-size:10px;letter-spacing:-0.4px">7</div>
<div class="a" style="left:0px;top:301.5px;width:19px;height:1px;background:#3c3c3c;"></div>
<div class="t c" style="left:0.1999999999999993px;top:320.1px;width:19px;color:#e2e2e2;font-size:10px;letter-spacing:-0.4px">8</div>
<div class="a" style="left:0px;top:316.5px;width:19px;height:1px;background:#3c3c3c;"></div>
<div class="t c" style="left:0.1999999999999993px;top:335.1px;width:19px;color:#e2e2e2;font-size:10px;letter-spacing:-0.4px">9</div>
<div class="a" style="left:0px;top:331.5px;width:19px;height:1px;background:#3c3c3c;"></div>
<div class="t c" style="left:0.1999999999999993px;top:350.1px;width:19px;color:#e2e2e2;font-size:10px;letter-spacing:-0.4px">10</div>
<div class="a" style="left:0px;top:346.5px;width:19px;height:1px;background:#3c3c3c;"></div>
<div class="t c" style="left:0.1999999999999993px;top:365.1px;width:19px;color:#e2e2e2;font-size:10px;letter-spacing:-0.4px">11</div>
<div class="a" style="left:0px;top:361.5px;width:19px;height:1px;background:#3c3c3c;"></div>
<div class="t c" style="left:0.1999999999999993px;top:380.1px;width:19px;color:#e2e2e2;font-size:10px;letter-spacing:-0.4px">12</div>
<div class="a" style="left:0px;top:376.5px;width:19px;height:1px;background:#3c3c3c;"></div>
<div class="t c" style="left:0.1999999999999993px;top:395.1px;width:19px;color:#e2e2e2;font-size:10px;letter-spacing:-0.4px">13</div>
<div class="a" style="left:0px;top:391.5px;width:19px;height:1px;background:#3c3c3c;"></div>
<div class="t c" style="left:0.1999999999999993px;top:410.1px;width:19px;color:#e2e2e2;font-size:10px;letter-spacing:-0.4px">14</div>
<div class="a" style="left:0px;top:406.5px;width:19px;height:1px;background:#3c3c3c;"></div>
<div class="t c" style="left:0.1999999999999993px;top:425.1px;width:19px;color:#e2e2e2;font-size:10px;letter-spacing:-0.4px">15</div>
<div class="a" style="left:0px;top:421.5px;width:19px;height:1px;background:#3c3c3c;"></div>
<div class="t c" style="left:0.1999999999999993px;top:440.1px;width:19px;color:#e2e2e2;font-size:10px;letter-spacing:-0.4px">16</div>
<div class="a" style="left:0px;top:436.5px;width:19px;height:1px;background:#3c3c3c;"></div>
<div class="t c" style="left:0.1999999999999993px;top:455.1px;width:19px;color:#e2e2e2;font-size:10px;letter-spacing:-0.4px">17</div>
<div class="a" style="left:0px;top:451.5px;width:19px;height:1px;background:#3c3c3c;"></div>
<div class="a" style="left:0px;top:466.5px;width:19px;height:15.5px;background:#666666;"></div>
<div class="a" style="left:17.6px;top:466.5px;width:1.6px;height:15.5px;background:#1f7a45;"></div>
<div class="t c" style="left:0.1999999999999993px;top:470.1px;width:19px;color:#e2e2e2;font-size:10px;letter-spacing:-0.4px">18</div>
<div class="a" style="left:0px;top:466.5px;width:19px;height:1px;background:#3c3c3c;"></div>
<div class="t c" style="left:0.1999999999999993px;top:485.1px;width:19px;color:#e2e2e2;font-size:10px;letter-spacing:-0.4px">19</div>
<div class="a" style="left:0px;top:481.5px;width:19px;height:1px;background:#3c3c3c;"></div>
<div class="t c" style="left:0.1999999999999993px;top:500.1px;width:19px;color:#e2e2e2;font-size:10px;letter-spacing:-0.4px">20</div>
<div class="a" style="left:0px;top:496.5px;width:19px;height:1px;background:#3c3c3c;"></div>
<div class="t c" style="left:0.1999999999999993px;top:515.1px;width:19px;color:#e2e2e2;font-size:10px;letter-spacing:-0.4px">21</div>
<div class="a" style="left:0px;top:511.5px;width:19px;height:1px;background:#3c3c3c;"></div>
<div class="t c" style="left:0.1999999999999993px;top:530.1px;width:19px;color:#e2e2e2;font-size:10px;letter-spacing:-0.4px">22</div>
<div class="a" style="left:0px;top:526.5px;width:19px;height:1px;background:#3c3c3c;"></div>
<svg style="left:590px;top:460px" width="60" height="30" viewBox="0 0 60 30"><rect x="4.5" y="6.1" width="48.6" height="16" fill="#fff" stroke="#217346" stroke-width="1.5"/><rect x="50.2" y="19.2" width="5.4" height="5.2" fill="#fff"/><rect x="51" y="20" width="4" height="3.8" fill="#217346"/></svg>
<div class="a" style="left:1008px;top:197px;width:16px;height:340px;background:#262626;"></div>
<div class="a" style="left:1011px;top:212px;width:10.4px;height:315px;background:#363636;"></div>
<div class="a" style="left:1011px;top:200.3px;width:10.4px;height:9.6px;background:#4a4a4a;"></div>
<svg style="left:1013.4px;top:203.4px" width="5.6" height="3.4"><path d="M0 3.4h5.6l-2.8-3.4z" fill="#a8a8a8"/></svg>
<div class="a" style="left:1011px;top:211px;width:10.4px;height:299px;background:#5a5a5a;"></div>
<div class="a" style="left:1011px;top:526.8px;width:10.4px;height:10.2px;background:#4a4a4a;"></div>
<svg style="left:1013.4px;top:530.4px" width="5.6" height="3.4"><path d="M0 0h5.6l-2.8 3.4z" fill="#a8a8a8"/></svg>
<svg style="left:0;top:0" width="1024" height="575" viewBox="0 0 1024 575" font-family="Liberation Sans, sans-serif"><rect x="19.6" y="212.3" width="548.2" height="215" fill="none" stroke="#d9d9d9" stroke-width="0.9"/><path d="M49.3 353.40H540.8" stroke="#d9d9d9" stroke-width="0.8"/><path d="M49.3 340.32H540.8" stroke="#d9d9d9" stroke-width="0.8"/><path d="M49.3 327.25H540.8" stroke="#d9d9d9" stroke-width="0.8"/><path d="M49.3 314.18H540.8" stroke="#d9d9d9" stroke-width="0.8"/><path d="M49.3 301.10H540.8" stroke="#d9d9d9" stroke-width="0.8"/><path d="M49.3 288.02H540.8" stroke="#d9d9d9" stroke-width="0.8"/><path d="M49.3 274.95H540.8" stroke="#d9d9d9" stroke-width="0.8"/><path d="M49.3 261.88H540.8" stroke="#d9d9d9" stroke-width="0.8"/><path d="M49.3 248.80H540.8" stroke="#d9d9d9" stroke-width="0.8"/><text transform="translate(40.40 355.60) scale(0.9 1)" font-size="9" fill="#595959" text-anchor="end">0</text><text transform="translate(40.40 342.52) scale(0.9 1)" font-size="9" fill="#595959" text-anchor="end">100</text><text transform="translate(40.40 329.45) scale(0.9 1)" font-size="9" fill="#595959" text-anchor="end">200</text><text transform="translate(40.40 316.38) scale(0.9 1)" font-size="9" fill="#595959" text-anchor="end">300</text><text transform="translate(40.40 303.30) scale(0.9 1)" font-size="9" fill="#595959" text-anchor="end">400</text><text transform="translate(40.40 290.22) scale(0.9 1)" font-size="9" fill="#595959" text-anchor="end">500</text><text transform="translate(40.40 277.15) scale(0.9 1)" font-size="9" fill="#595959" text-anchor="end">600</text><text transform="translate(40.40 264.07) scale(0.9 1)" font-size="9" fill="#595959" text-anchor="end">700</text><text transform="translate(40.40 251.00) scale(0.9 1)" font-size="9" fill="#595959" text-anchor="end">800</text><text transform="translate(548.90 355.60) scale(0.9 1)" font-size="9" fill="#595959" text-anchor="start">0.0</text><text transform="translate(548.90 342.52) scale(0.9 1)" font-size="9" fill="#595959" text-anchor="start">0.2</text><text transform="translate(548.90 329.45) scale(0.9 1)" font-size="9" fill="#595959" text-anchor="start">0.4</text><text transform="translate(548.90 316.38) scale(0.9 1)" font-size="9" fill="#595959" text-anchor="start">0.6</text><text transform="translate(548.90 303.30) scale(0.9 1)" font-size="9" fill="#595959" text-anchor="start">0.8</text><text transform="translate(548.90 290.22) scale(0.9 1)" font-size="9" fill="#595959" text-anchor="start">1.0</text><text transform="translate(548.90 277.15) scale(0.9 1)" font-size="9" fill="#595959" text-anchor="start">1.2</text><text transform="translate(548.90 264.07) scale(0.9 1)" font-size="9" fill="#595959" text-anchor="start">1.4</text><text transform="translate(548.90 251.00) scale(0.9 1)" font-size="9" fill="#595959" text-anchor="start">1.6</text><rect x="52.95" y="327.25" width="12" height="26.15" fill="#4472c4"/><rect x="74.36" y="300.05" width="12" height="53.35" fill="#4472c4"/><rect x="95.77" y="306.20" width="12" height="47.20" fill="#4472c4"/><rect x="117.18" y="319.14" width="12" height="34.26" fill="#4472c4"/><rect x="138.59" y="306.20" width="12" height="47.20" fill="#4472c4"/><rect x="160.00" y="334.18" width="12" height="19.22" fill="#4472c4"/><rect x="181.41" y="271.03" width="12" height="82.37" fill="#4472c4"/><rect x="202.82" y="272.99" width="12" height="80.41" fill="#4472c4"/><rect x="224.23" y="337.71" width="12" height="15.69" fill="#4472c4"/><rect x="245.64" y="310.12" width="12" height="43.28" fill="#4472c4"/><rect x="267.05" y="283.45" width="12" height="69.95" fill="#4472c4"/><rect x="288.46" y="306.98" width="12" height="46.42" fill="#4472c4"/><rect x="309.87" y="327.25" width="12" height="26.15" fill="#4472c4"/><rect x="331.28" y="265.01" width="12" height="88.39" fill="#4472c4"/><rect x="352.69" y="312.21" width="12" height="41.19" fill="#4472c4"/><rect x="374.10" y="334.96" width="12" height="18.44" fill="#4472c4"/><rect x="395.51" y="304.11" width="12" height="49.29" fill="#4472c4"/><rect x="416.92" y="334.18" width="12" height="19.22" fill="#4472c4"/><rect x="438.33" y="302.67" width="12" height="50.73" fill="#4472c4"/><rect x="459.74" y="293.65" width="12" height="59.75" fill="#4472c4"/><rect x="481.15" y="321.24" width="12" height="32.16" fill="#4472c4"/><rect x="502.56" y="326.20" width="12" height="27.20" fill="#4472c4"/><rect x="523.97" y="287.63" width="12" height="65.77" fill="#4472c4"/><path d="M58.05 255.5H529.97" stroke="#ffc000" stroke-width="2.2" stroke-dasharray="8.8 6.95"/><path d="M58.05 301.2H529.97" stroke="#ffc000" stroke-width="2.2" stroke-dasharray="8.8 6.95"/><path d="M58.95 288.4 L80.36 288.4 L101.77 288.4 L123.18 288.4 L144.59 288.4 L166.00 288.4 L187.41 288.9 L208.82 284.1 L230.23 286.1 L251.64 286.1 L273.05 282.8 L294.46 282.6 L315.87 279 L337.28 282.8 L358.69 289.5 L380.10 286.4 L401.51 284.3 L422.92 292.8 L444.33 293 L465.74 287 L487.15 297.2 L508.56 300.1 L529.97 290.7" fill="none" stroke="#a5a5a5" stroke-width="2.1" stroke-linejoin="round" stroke-linecap="round"/><path d="M58.95 288.4 L80.36 277.6 L101.77 272.8 L123.18 275.1 L144.59 271.9 L166.00 280.3 L187.41 264.6 L208.82 258.2 L230.23 271.3 L251.64 272.8 L273.05 266.7 L294.46 269.7 L315.87 277.8 L337.28 266.7 L358.69 271.9 L380.10 282.8 L401.51 280.9 L422.92 289.5 L444.33 284.9 L465.74 280.9 L487.15 285.3 L508.56 290.1 L529.97 281.7" fill="none" stroke="#ed7d31" stroke-width="2.1" stroke-linejoin="round" stroke-linecap="round"/><text transform="translate(61.45 365.70) rotate(-45) scale(0.965 1)" font-size="9" fill="#595959" text-anchor="end">21/08/2017</text><text transform="translate(82.86 365.70) rotate(-45) scale(0.965 1)" font-size="9" fill="#595959" text-anchor="end">22/08/2017</text><text transform="translate(104.27 365.70) rotate(-45) scale(0.965 1)" font-size="9" fill="#595959" text-anchor="end">23/08/2017</text><text transform="translate(125.68 365.70) rotate(-45) scale(0.965 1)" font-size="9" fill="#595959" text-anchor="end">24/08/2017</text><text transform="translate(147.09 365.70) rotate(-45) scale(0.965 1)" font-size="9" fill="#595959" text-anchor="end">25/08/2017</text><text transform="translate(168.50 365.70) rotate(-45) scale(0.965 1)" font-size="9" fill="#595959" text-anchor="end">26/08/2017</text><text transform="translate(189.91 365.70) rotate(-45) scale(0.965 1)" font-size="9" fill="#595959" text-anchor="end">27/08/2017</text><text transform="translate(211.32 365.70) rotate(-45) scale(0.965 1)" font-size="9" fill="#595959" text-anchor="end">28/08/2017</text><text transform="translate(232.73 365.70) rotate(-45) scale(0.965 1)" font-size="9" fill="#595959" text-anchor="end">29/08/2017</text><text transform="translate(254.14 365.70) rotate(-45) scale(0.965 1)" font-size="9" fill="#595959" text-anchor="end">30/08/2017</text><text transform="translate(275.55 365.70) rotate(-45) scale(0.965 1)" font-size="9" fill="#595959" text-anchor="end">31/08/2017</text><text transform="translate(296.96 365.70) rotate(-45) scale(0.965 1)" font-size="9" fill="#595959" text-anchor="end">01/09/2017</text><text transform="translate(318.37 365.70) rotate(-45) scale(0.965 1)" font-size="9" fill="#595959" text-anchor="end">02/09/2017</text><text transform="translate(339.78 365.70) rotate(-45) scale(0.965 1)" font-size="9" fill="#595959" text-anchor="end">03/09/2017</text><text transform="translate(361.19 365.70) rotate(-45) scale(0.965 1)" font-size="9" fill="#595959" text-anchor="end">04/09/2017</text><text transform="translate(382.60 365.70) rotate(-45) scale(0.965 1)" font-size="9" fill="#595959" text-anchor="end">05/09/2017</text><text transform="translate(404.01 365.70) rotate(-45) scale(0.965 1)" font-size="9" fill="#595959" text-anchor="end">06/09/2017</text><text transform="translate(425.42 365.70) rotate(-45) scale(0.965 1)" font-size="9" fill="#595959" text-anchor="end">07/09/2017</text><text transform="translate(446.83 365.70) rotate(-45) scale(0.965 1)" font-size="9" fill="#595959" text-anchor="end">08/09/2017</text><text transform="translate(468.24 365.70) rotate(-45) scale(0.965 1)" font-size="9" fill="#595959" text-anchor="end">09/09/2017</text><text transform="translate(489.65 365.70) rotate(-45) scale(0.965 1)" font-size="9" fill="#595959" text-anchor="end">10/09/2017</text><text transform="translate(511.06 365.70) rotate(-45) scale(0.965 1)" font-size="9" fill="#595959" text-anchor="end">11/09/2017</text><text transform="translate(532.47 365.70) rotate(-45) scale(0.965 1)" font-size="9" fill="#595959" text-anchor="end">12/09/2017</text><text transform="translate(292.80 232.90) scale(0.95 1)" font-size="12.9" fill="#595959" text-anchor="middle">Rolling 28 Day</text><rect x="128" y="410.5" width="25" height="4.8" fill="#4472c4"/><text transform="translate(158.50 416.00) scale(0.88 1)" font-size="9" fill="#595959" text-anchor="start">Load</text><path d="M188 412.9H212.8" stroke="#ed7d31" stroke-width="2.1" stroke-linecap="round"/><text transform="translate(219.00 416.00) scale(0.88 1)" font-size="9" fill="#595959" text-anchor="start">EWMA A:C</text><path d="M271.5 412.9H298.5" stroke="#a5a5a5" stroke-width="2.1" stroke-linecap="round"/><text transform="translate(302.10 416.00) scale(0.88 1)" font-size="9" fill="#595959" text-anchor="start">A:C</text><path d="M327.6 412.9H352.6" stroke="#ffc000" stroke-width="2.2" stroke-dasharray="8.8 7"/><text transform="translate(358.40 416.00) scale(0.88 1)" font-size="9" fill="#595959" text-anchor="start">A:C Low</text><path d="M399.4 412.9H424.4" stroke="#ffc000" stroke-width="2.2" stroke-dasharray="8.8 7"/><text transform="translate(431.00 416.00) scale(0.88 1)" font-size="9" fill="#595959" text-anchor="start">A:C High</text></svg>
<svg style="left:0;top:0" width="1024" height="575" viewBox="0 0 1024 575" font-family="Liberation Sans, sans-serif"><rect x="570.2" y="218.4" width="401.3" height="215.5" fill="#fff" stroke="#d9d9d9" stroke-width="0.9"/><path d="M598.6 359.30H946" stroke="#d9d9d9" stroke-width="0.8"/><path d="M598.6 341.92H946" stroke="#d9d9d9" stroke-width="0.8"/><path d="M598.6 324.53H946" stroke="#d9d9d9" stroke-width="0.8"/><path d="M598.6 307.15H946" stroke="#d9d9d9" stroke-width="0.8"/><path d="M598.6 289.77H946" stroke="#d9d9d9" stroke-width="0.8"/><path d="M598.6 272.38H946" stroke="#d9d9d9" stroke-width="0.8"/><path d="M598.6 255.00H946" stroke="#d9d9d9" stroke-width="0.8"/><text transform="translate(590.20 361.50) scale(0.9 1)" font-size="9" fill="#595959" text-anchor="end">0</text><text transform="translate(590.20 344.12) scale(0.9 1)" font-size="9" fill="#595959" text-anchor="end">100</text><text transform="translate(590.20 326.73) scale(0.9 1)" font-size="9" fill="#595959" text-anchor="end">200</text><text transform="translate(590.20 309.35) scale(0.9 1)" font-size="9" fill="#595959" text-anchor="end">300</text><text transform="translate(590.20 291.97) scale(0.9 1)" font-size="9" fill="#595959" text-anchor="end">400</text><text transform="translate(590.20 274.58) scale(0.9 1)" font-size="9" fill="#595959" text-anchor="end">500</text><text transform="translate(590.20 257.20) scale(0.9 1)" font-size="9" fill="#595959" text-anchor="end">600</text><text transform="translate(953.80 361.50) scale(0.9 1)" font-size="9" fill="#595959" text-anchor="start">0.0</text><text transform="translate(953.80 348.46) scale(0.9 1)" font-size="9" fill="#595959" text-anchor="start">0.2</text><text transform="translate(953.80 335.43) scale(0.9 1)" font-size="9" fill="#595959" text-anchor="start">0.4</text><text transform="translate(953.80 322.39) scale(0.9 1)" font-size="9" fill="#595959" text-anchor="start">0.6</text><text transform="translate(953.80 309.35) scale(0.9 1)" font-size="9" fill="#595959" text-anchor="start">0.8</text><text transform="translate(953.80 296.31) scale(0.9 1)" font-size="9" fill="#595959" text-anchor="start">1.0</text><text transform="translate(953.80 283.27) scale(0.9 1)" font-size="9" fill="#595959" text-anchor="start">1.2</text><text transform="translate(953.80 270.24) scale(0.9 1)" font-size="9" fill="#595959" text-anchor="start">1.4</text><text transform="translate(953.80 257.20) scale(0.9 1)" font-size="9" fill="#595959" text-anchor="start">1.6</text><rect x="607.45" y="334.79" width="24.7" height="24.51" fill="#4472c4"/><rect x="650.88" y="293.07" width="24.7" height="66.23" fill="#4472c4"/><rect x="694.31" y="333.23" width="24.7" height="26.08" fill="#4472c4"/><rect x="737.74" y="291.85" width="24.7" height="67.45" fill="#4472c4"/><rect x="781.17" y="279.68" width="24.7" height="79.62" fill="#4472c4"/><rect x="824.60" y="317.06" width="24.7" height="42.24" fill="#4472c4"/><rect x="868.03" y="322.97" width="24.7" height="36.33" fill="#4472c4"/><rect x="911.46" y="272.38" width="24.7" height="86.92" fill="#4472c4"/><path d="M618.90 261.5H923.81" stroke="#ffc000" stroke-width="2.2" stroke-dasharray="8.8 6.95"/><path d="M618.90 307.1H923.81" stroke="#ffc000" stroke-width="2.2" stroke-dasharray="8.8 6.95"/><path d="M619.80 292.3 L663.23 290.4 L706.66 298.3 L750.09 298.8 L793.52 293 L836.95 303.5 L880.38 305.8 L923.81 297" fill="none" stroke="#a5a5a5" stroke-width="2.1" stroke-linejoin="round" stroke-linecap="round"/><path d="M619.80 288.9 L663.23 287 L706.66 295.4 L750.09 291.5 L793.52 287 L836.95 291.5 L880.38 295.9 L923.81 287.8" fill="none" stroke="#ed7d31" stroke-width="2.1" stroke-linejoin="round" stroke-linecap="round"/><text transform="translate(624.30 371.60) rotate(-45) scale(0.965 1)" font-size="9" fill="#595959" text-anchor="end">05/09/2017</text><text transform="translate(667.73 371.60) rotate(-45) scale(0.965 1)" font-size="9" fill="#595959" text-anchor="end">06/09/2017</text><text transform="translate(711.16 371.60) rotate(-45) scale(0.965 1)" font-size="9" fill="#595959" text-anchor="end">07/09/2017</text><text transform="translate(754.59 371.60) rotate(-45) scale(0.965 1)" font-size="9" fill="#595959" text-anchor="end">08/09/2017</text><text transform="translate(798.02 371.60) rotate(-45) scale(0.965 1)" font-size="9" fill="#595959" text-anchor="end">09/09/2017</text><text transform="translate(841.45 371.60) rotate(-45) scale(0.965 1)" font-size="9" fill="#595959" text-anchor="end">10/09/2017</text><text transform="translate(884.88 371.60) rotate(-45) scale(0.965 1)" font-size="9" fill="#595959" text-anchor="end">11/09/2017</text><text transform="translate(928.31 371.60) rotate(-45) scale(0.965 1)" font-size="9" fill="#595959" text-anchor="end">12/09/2017</text><text transform="translate(771.00 239.00) scale(0.95 1)" font-size="12.9" fill="#595959" text-anchor="middle">Rolling 7 Day</text><rect x="603" y="416.40000000000003" width="24.600000000000023" height="4.8" fill="#4472c4"/><text transform="translate(633.00 421.90) scale(0.88 1)" font-size="9" fill="#595959" text-anchor="start">Load</text><path d="M662.4 418.8H687.2" stroke="#ed7d31" stroke-width="2.1" stroke-linecap="round"/><text transform="translate(692.70 421.90) scale(0.88 1)" font-size="9" fill="#595959" text-anchor="start">EWMA A:C</text><path d="M743.8 418.8H768.6" stroke="#a5a5a5" stroke-width="2.1" stroke-linecap="round"/><text transform="translate(772.70 421.90) scale(0.88 1)" font-size="9" fill="#595959" text-anchor="start">RA A:C</text><path d="M809.2 418.8H834.3" stroke="#ffc000" stroke-width="2.2" stroke-dasharray="8.8 7"/><text transform="translate(840.00 421.90) scale(0.88 1)" font-size="9" fill="#595959" text-anchor="start">A:C Low</text><path d="M881.1 418.8H906.2" stroke="#ffc000" stroke-width="2.2" stroke-dasharray="8.8 7"/><text transform="translate(911.20 421.90) scale(0.88 1)" font-size="9" fill="#595959" text-anchor="start">A:C High</text></svg>
<div class="a" style="left:0px;top:537px;width:1024px;height:21px;background:#252525;"></div>
<svg style="left:20.5px;top:544px" width="4" height="6"><path d="M4 0v6l-4-3z" fill="#c8c8c8"/></svg>
<svg style="left:41.5px;top:544px" width="4" height="6"><path d="M0 0v6l4-3z" fill="#c8c8c8"/></svg>
<div class="a" style="left:75px;top:540px;width:1px;height:15px;background:#6a6a6a;"></div>
<div class="a" style="left:77px;top:538.8px;width:85px;height:17px;background:#363636;"></div>
<div class="t" style="left:85.8px;top:540.80px;font-size:9.8px;color:#e6e6e6;letter-spacing:0.024px;">Load Workings</div>
<div class="a" style="left:163px;top:537px;width:47px;height:18.8px;background:linear-gradient(#ffffff,#f2f2f2 40%,#cfcfcf);border-bottom:2px solid #1f7a45"></div>
<div class="t" style="left:172px;top:540.80px;font-size:9.8px;color:#1f7a45;letter-spacing:-0.374px;font-weight:bold;">Charts</div>
<div class="a" style="left:211.3px;top:538.8px;width:107.19999999999999px;height:17px;background:#363636;"></div>
<div class="t" style="left:221px;top:540.80px;font-size:9.8px;color:#e6e6e6;letter-spacing:0.002px;">Workload Raw Data</div>
<div class="a" style="left:320px;top:538.8px;width:46.5px;height:17px;background:#363636;"></div>
<div class="t" style="left:330px;top:540.80px;font-size:9.8px;color:#e6e6e6;letter-spacing:-0.056px;">Admin</div>
<div class="a" style="left:367.5px;top:540px;width:1px;height:15px;background:#6a6a6a;"></div>
<svg style="left:392.2px;top:541.1px" width="13" height="13" viewBox="0 0 13 13"><circle cx="6.5" cy="6.5" r="5.7" fill="none" stroke="#e0e0e0" stroke-width="0.9"/><path d="M6.5 3.6V9.4M3.6 6.5H9.4" stroke="#f4f4f4" stroke-width="1.3"/></svg>
<div class="a" style="left:928.7px;top:543.6px;width:1.3px;height:1.3px;background:#e0e0e0;"></div>
<div class="a" style="left:928.7px;top:546.6px;width:1.3px;height:1.3px;background:#e0e0e0;"></div>
<div class="a" style="left:928.7px;top:549.6px;width:1.3px;height:1.3px;background:#e0e0e0;"></div>
<div class="a" style="left:942px;top:542.5px;width:67.5px;height:10.2px;background:#3a3a3a;"></div>
<div class="a" style="left:942px;top:542.5px;width:10px;height:10.2px;background:#4a4a4a;"></div>
<svg style="left:945.2px;top:545px" width="3.4" height="5"><path d="M3.4 0v5l-3.4-2.5z" fill="#9a9a9a"/></svg>
<div class="a" style="left:953.3px;top:542.5px;width:38.8px;height:10.2px;background:#5a5a5a;"></div>
<div class="a" style="left:998.8px;top:542.5px;width:10.6px;height:10.2px;background:#4a4a4a;"></div>
<svg style="left:1002.6px;top:545px" width="3.4" height="5"><path d="M0 0v5l3.4-2.5z" fill="#9a9a9a"/></svg>
<div class="a" style="left:0px;top:557.5px;width:1024px;height:15.7px;background:#2b2b2b;"></div>
<div class="a" style="left:0px;top:557px;width:1024px;height:1px;background:#333333;"></div>
<div class="a" style="left:0px;top:573.2px;width:1024px;height:2px;background:#0e0e0e;"></div>
<div class="a" style="left:83px;top:573.2px;width:26px;height:2px;background:#3c3c3c;"></div>
<div class="t" style="left:5px;top:559.80px;font-size:9px;color:#f0f0f0;letter-spacing:-0.503px;">Ready</div>
<svg style="left:43.5px;top:560.5px" width="10" height="10" viewBox="0 0 10 10"><rect x="2.4" y="2" width="7.2" height="7.6" fill="none" stroke="#e6e6e6" stroke-width="0.9"/><path d="M2.4 4.4H9.6" stroke="#e6e6e6" stroke-width="0.9"/><path d="M4 6h0.9M5.8 6h0.9M7.6 6h0.9M4 7.8h0.9M5.8 7.8h0.9M7.6 7.8h0.9" stroke="#e6e6e6" stroke-width="0.8"/><circle cx="1.8" cy="1.8" r="1.7" fill="#fff"/></svg>
<div class="a" style="left:805.2px;top:558.2px;width:28.5px;height:15px;background:#474747;"></div>
<svg style="left:813.8px;top:560.8px" width="10.4" height="10" viewBox="0 0 11 9" preserveAspectRatio="none"><rect x="0.5" y="0.5" width="10" height="8" fill="none" stroke="#f0f0f0" stroke-width="0.9"/><path d="M0.5 3.2H10.5M0.5 5.8H10.5M3.9 0.5V8.5M7.2 0.5V8.5" stroke="#f0f0f0" stroke-width="0.8"/></svg>
<svg style="left:842.5px;top:560.8px" width="10.6" height="10" viewBox="0 0 11 9" preserveAspectRatio="none"><rect x="0.5" y="0.5" width="10" height="8" fill="none" stroke="#e0e0e0" stroke-width="0.9"/><rect x="3" y="2.4" width="5" height="4.4" fill="none" stroke="#e0e0e0" stroke-width="0.8"/><path d="M4.4 4h2.2M4.4 5.4h2.2" stroke="#e0e0e0" stroke-width="0.6"/></svg>
<svg style="left:871px;top:560.8px" width="10.8" height="10" viewBox="0 0 11 9" preserveAspectRatio="none"><rect x="0.5" y="0.5" width="10" height="8" fill="none" stroke="#e0e0e0" stroke-width="0.9"/><rect x="1" y="1" width="2.8" height="4.6" fill="#e8e8e8"/><rect x="4.6" y="1" width="5.4" height="4.6" fill="#e8e8e8"/><rect x="1" y="5.6" width="2.8" height="1" fill="#e8e8e8"/></svg>
<div class="a" style="left:894.3px;top:565.4px;width:4.6px;height:1.5px;background:#e6e6e6;"></div>
<div class="a" style="left:902px;top:565.3px;width:75px;height:0.9px;background:#d0d0d0;"></div>
<div class="a" style="left:937.4px;top:561.3px;width:2.8px;height:8.6px;background:#f4f4f4;"></div>
<div class="a" style="left:980px;top:565.1px;width:5.4px;height:1.3px;background:#f0f0f0;"></div>
<div class="a" style="left:982.05px;top:563px;width:1.3px;height:5.4px;background:#f0f0f0;"></div>
<div class="t" style="left:998px;top:559.80px;font-size:9px;color:#f0f0f0;letter-spacing:-0.755px;">100%</div>
</div></body></html>
